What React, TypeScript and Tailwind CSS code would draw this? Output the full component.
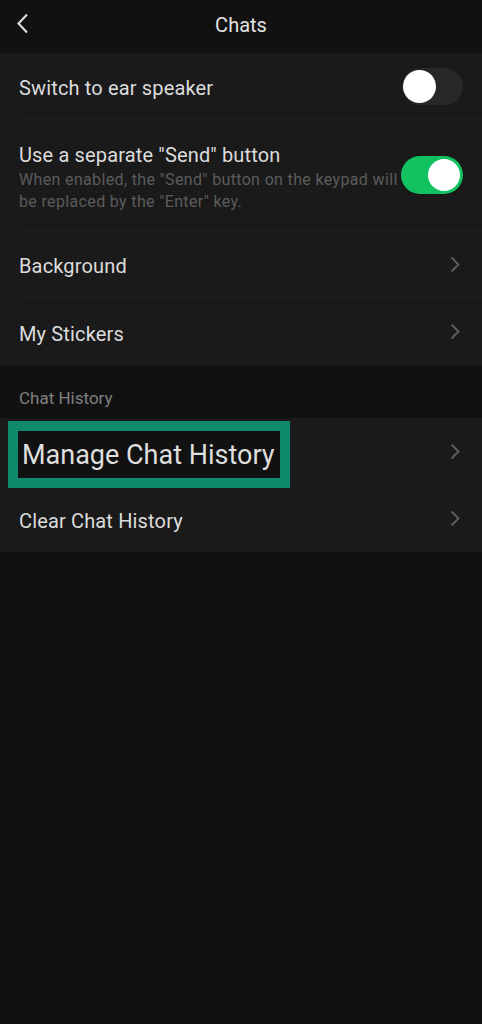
const font = { fontFamily: 'Roboto, "Noto Sans", sans-serif' }

function Chevron() {
  return (
    <svg width="10" height="17" viewBox="0 0 10 17" fill="none" className="shrink-0">
      <path d="M1.5 1.5L8.5 8.5L1.5 15.5" stroke="#5f5f5f" strokeWidth="1.8" />
    </svg>
  )
}

function Toggle({ on }: { on: boolean }) {
  return on ? (
    <div className="flex h-[38px] w-[62px] shrink-0 items-center justify-end rounded-full bg-[#12c15f] px-[3px]">
      <div className="h-[32px] w-[32px] rounded-full bg-white" />
    </div>
  ) : (
    <div className="flex h-[37px] w-[61px] shrink-0 items-center justify-start rounded-full bg-[#272827] px-[1px]">
      <div className="h-[33px] w-[33px] rounded-full bg-white" />
    </div>
  )
}

function LinkRow({ label, last }: { label: string; last?: boolean }) {
  return (
    <div className={`flex h-[67px] items-center justify-between pr-[22px] ${last ? '' : 'border-b border-[#202020]'}`}>
      <span className="mt-[4px] text-[20px] tracking-[0.15px] text-[#dcdcdc]">{label}</span>
      <Chevron />
    </div>
  )
}

export default function App() {
  return (
    <div className="min-h-[1024px] w-[482px] bg-[#111111]" style={font}>
      <div className="relative flex h-[53px] items-center justify-center pb-[3px]">
        <svg width="14" height="22" viewBox="0 0 14 22" fill="none" className="absolute left-[16px] top-[13px]">
          <path d="M11 1.5L2.5 10.5L11 19.5" stroke="#e0e0e0" strokeWidth="2" />
        </svg>
        <span className="text-[20px] text-[#e2e2e2]">Chats</span>
      </div>

      <div className="bg-[#1a1a1a] pl-[19px]">
        <div className="flex h-[67px] items-center justify-between border-b border-[#202020] pr-[19px]">
          <span className="mt-[4px] text-[20px] tracking-[0.15px] text-[#dcdcdc]">Switch to ear speaker</span>
          <Toggle on={false} />
        </div>
        <div className="flex h-[111px] items-center justify-between border-b border-[#202020] pr-[19px]">
          <div className="mt-[4px] flex flex-col">
            <span className="text-[20px] leading-[26px] tracking-[0.15px] text-[#dcdcdc]">Use a separate "Send" button</span>
            <span className="mt-[1px] text-[16px] leading-[22px] tracking-[0.35px] text-[#5c5c5c]">
              When enabled, the "Send" button on the keypad will
              <br />
              be replaced by the "Enter" key.
            </span>
          </div>
          <Toggle on={true} />
        </div>
        <LinkRow label="Background" />
        <LinkRow label="My Stickers" last />
      </div>

      <div className="flex h-[53px] items-center pl-[19px] pt-[14px]">
        <span className="text-[17px] text-[#808080]">Chat History</span>
      </div>

      <div className="bg-[#1a1a1a]">
        <div className="flex h-[67px] items-center justify-between border-b border-[#202020] pl-[8px] pr-[22px]">
          <div className="mt-[7px] flex h-[67px] w-[282px] items-center border-[10px] border-[#0f8a6c] bg-[#111111] pl-[4px]">
            <span className="mt-[2px] text-[27px] text-[#dedede]">Manage Chat History</span>
          </div>
          <Chevron />
        </div>
        <div className="pl-[19px]">
          <LinkRow label="Clear Chat History" last />
        </div>
      </div>
    </div>
  )
}
